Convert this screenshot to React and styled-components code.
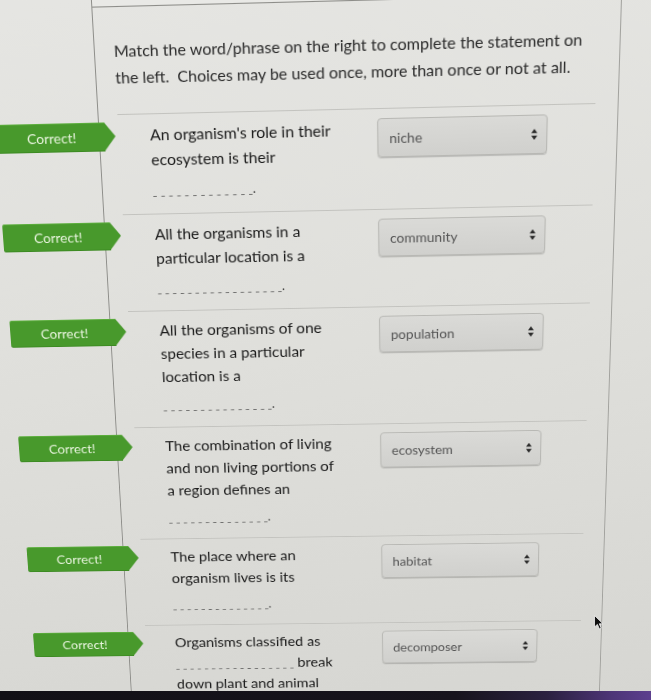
import React from "react";
import styled, { createGlobalStyle } from "styled-components";

const Global = createGlobalStyle`
  html, body { margin: 0; padding: 0; overflow: hidden; background: #d6d6d2; }
  * { box-sizing: border-box; }
`;

/* ---- projective mapping of the flat page onto the photographed screen ---- */
function solve(A, b) {
  const n = b.length;
  const M = A.map((r, i) => [...r, b[i]]);
  for (let c = 0; c < n; c++) {
    let p = c;
    for (let r = c + 1; r < n; r++) if (Math.abs(M[r][c]) > Math.abs(M[p][c])) p = r;
    [M[c], M[p]] = [M[p], M[c]];
    for (let r = 0; r < n; r++) {
      if (r === c) continue;
      const f = M[r][c] / M[c][c];
      for (let k = c; k <= n; k++) M[r][k] -= f * M[c][k];
    }
  }
  return M.map((r, i) => r[n] / r[i]);
}

function homography(src, dst) {
  const A = [];
  const b = [];
  for (let i = 0; i < 4; i++) {
    const [x, y] = src[i];
    const [X, Y] = dst[i];
    A.push([x, y, 1, 0, 0, 0, -x * X, -y * X]);
    b.push(X);
    A.push([0, 0, 0, x, y, 1, -x * Y, -y * Y]);
    b.push(Y);
  }
  const h = solve(A, b);
  return `matrix3d(${h[0]},${h[3]},0,${h[6]},${h[1]},${h[4]},0,${h[7]},0,0,1,0,${h[2]},${h[5]},0,1)`;
}

const PAGE_MATRIX = homography(
  [
    [160, 157],
    [680, 157],
    [160, 712],
    [680, 712],
  ],
  [
    [98.5, 114.5],
    [618.7, 102.5],
    [127.9, 625.2],
    [602.2, 619.8],
  ]
);

/* ---- styled parts ---- */
const Viewport = styled.div`
  width: 651px;
  height: 700px;
  overflow: hidden;
  display: flex;
  flex-direction: column;
  background: #d6d6d2;
`;

const Photo = styled.div`
  position: relative;
  flex: 1;
  overflow: hidden;
`;

const Page = styled.div`
  width: 780px;
  height: 900px;
  transform-origin: 0 0;
  font-family: Lato, "Liberation Sans", sans-serif;
  background:
    linear-gradient(
      to right,
      transparent 159px,
      #8e8e8a 159px,
      #8e8e8a 160px,
      transparent 160px,
      transparent 679px,
      #a2a29e 679px,
      #a2a29e 680px,
      transparent 680px
    ),
    linear-gradient(172deg, #e6e6e3 0%, #dfdfdb 45%, #d4d4d0 100%);
`;

const TopBox = styled.div`
  margin-left: 160px;
  width: 316px;
  height: 53px;
  background: #e9e9e6;
  border-bottom: 1px solid #8c8c88;
`;

const Instruction = styled.p`
  margin: 29px 0 24px 179px;
  font-size: 16px;
  line-height: 25.5px;
  color: #2b2b2b;
`;

const Rule = styled.div`
  margin-left: 179px;
  width: 478px;
  height: 1px;
  background: #c3c3bf;
`;

const Row = styled.div`
  display: flex;
  align-items: flex-start;
  padding: 7px 0 13px 54px;
`;

const Badge = styled.div`
  position: relative;
  flex: 0 0 111px;
  margin-right: 11px;
  height: 29px;
  padding-left: 32px;
  font-size: 14px;
  line-height: 29px;
  color: #eaf5e0;
  background: #48992c;
  border-radius: 3px 0 0 3px;
  box-shadow: inset 0 1px 0 #5cae3d, inset 0 -1px 0 #3c8a22;

  &::after {
    content: "";
    position: absolute;
    left: 100%;
    top: 0;
    border-style: solid;
    border-width: 14.5px 0 14.5px 11px;
    border-color: transparent transparent transparent #48992c;
  }
`;

const Statement = styled.div`
  flex: 0 0 192px;
  margin: 0 37px 0 35px;
  font-size: 16px;
  line-height: 25px;
  color: #1b1b1b;
  white-space: nowrap;
`;

const Line = styled.div`
  height: 25px;
`;

const BlankLine = styled.div`
  height: 25px;
  margin-top: ${(p) => p.$gap}px;
`;

const Blank = styled.span`
  display: inline-block;
  width: ${(p) => p.$w}px;
  height: 12px;
  vertical-align: baseline;
  white-space: nowrap;
  text-align: justify;
  text-align-last: justify;
  font-size: 9px;
  font-weight: 700;
  line-height: 12px;
  color: #4e4e4e;
`;

const Period = styled.span`
  font-size: 13px;
  color: #333;
`;

const Select = styled.div`
  flex: 0 0 170px;
  height: 39px;
  margin-top: 2px;
  display: flex;
  align-items: center;
  justify-content: space-between;
  padding: 0 9px 0 11px;
  font-size: 14px;
  color: #545454;
  background: linear-gradient(#dadad7, #d0d0cd);
  border: 1px solid #b8b8b4;
  border-radius: 4px;
  box-shadow: 0 1px 1px rgba(0, 0, 0, 0.18);
`;

const Bezel = styled.div`
  height: 9px;
  background: linear-gradient(
    to right,
    #121016 0%,
    #17141d 70%,
    #2b2140 84%,
    #4d3577 94%,
    #5c3f8e 100%
  );
`;

const Cursor = styled.svg`
  position: absolute;
  left: 594px;
  top: 615px;
`;

function Arrows() {
  return (
    <svg width="6" height="11" viewBox="0 0 6 11">
      <path d="M3 0 L6 4.2 L0 4.2 Z" fill="#2a2a2a" />
      <path d="M3 11 L6 6.8 L0 6.8 Z" fill="#2a2a2a" />
    </svg>
  );
}

function BlankField({ w }) {
  const n = Math.floor(w / 7.4);
  return <Blank $w={w}>{Array(n).fill("_").join(" ")}</Blank>;
}

const rows = [
  { lines: ["An organism's role in their", "ecosystem is their"], blank: 102, answer: "niche" },
  { lines: ["All the organisms in a", "particular location is a"], blank: 129, answer: "community" },
  {
    lines: ["All the organisms of one", "species in a particular", "location is a"],
    blank: 115,
    answer: "population",
  },
  {
    lines: ["The combination of living", "and non living portions of", "a region defines an"],
    blank: 107,
    answer: "ecosystem",
  },
  { lines: ["The place where an", "organism lives is its"], blank: 105, answer: "habitat" },
  {
    lines: ["Organisms classified as"],
    inline: { blank: 131, after: " break" },
    tail: ["down plant and animal"],
    answer: "decomposer",
  },
];

function QuestionRow({ row }) {
  return (
    <>
      <Rule />
      <Row>
        <Badge>Correct!</Badge>
        <Statement>
          {row.lines.map((l) => (
            <Line key={l}>{l}</Line>
          ))}
          {row.inline ? (
            <>
              <Line>
                <BlankField w={row.inline.blank} />
                {row.inline.after}
              </Line>
              {row.tail.map((l) => (
                <Line key={l}>{l}</Line>
              ))}
            </>
          ) : (
            <BlankLine $gap={5}>
              <BlankField w={row.blank} />
              <Period>.</Period>
            </BlankLine>
          )}
        </Statement>
        <Select>
          <span>{row.answer}</span>
          <Arrows />
        </Select>
      </Row>
    </>
  );
}

export default function App() {
  return (
    <>
      <Global />
      <Viewport>
        <Photo>
          <Page style={{ transform: PAGE_MATRIX }}>
            <TopBox />
            <Instruction>
              Match the word/phrase on the right to complete the statement on
              <br />
              the left.&nbsp; Choices may be used once, more than once or not at all.
            </Instruction>
            {rows.map((r) => (
              <QuestionRow key={r.answer} row={r} />
            ))}
          </Page>
          <Cursor width="10" height="15" viewBox="0 0 10 15">
            <path
              d="M0.5 0.5 L0.5 12 L3.4 9.4 L5.4 14 L7.2 13.2 L5.3 8.8 L9 8.8 Z"
              fill="#111"
              stroke="#f4f4f4"
              strokeWidth="0.8"
            />
          </Cursor>
        </Photo>
        <Bezel />
      </Viewport>
    </>
  );
}
